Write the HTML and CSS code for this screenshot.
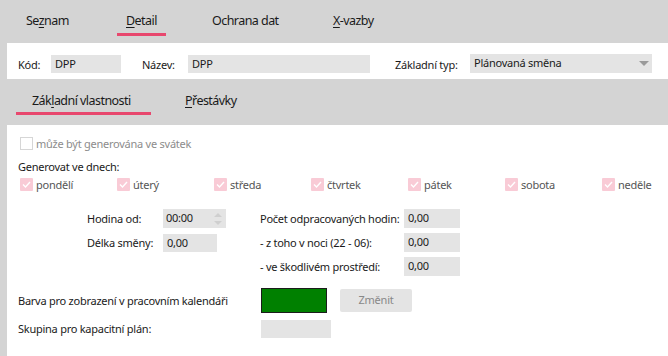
FILE: index.html
```html
<!DOCTYPE html>
<html lang="cs">
<head>
<meta charset="utf-8">
<link rel="stylesheet" href="styles.css">
</head>
<body>
<nav class="tabs tabs-top">
  <div class="tab t1">Se<u>z</u>nam</div>
  <div class="tab t2 active"><u>D</u>etail</div>
  <div class="tab t3">Ochrana dat</div>
  <div class="tab t4"><u>X</u>-vazby</div>
</nav>
<section class="panel head">
  <label class="lbl l-kod">Kód:</label>
  <div class="inp w70">DPP</div>
  <label class="lbl l-naz">Název:</label>
  <div class="inp w182">DPP</div>
  <label class="lbl l-typ">Základní typ:</label>
  <div class="inp w182 select">Plánovaná směna<span class="arrow"></span></div>
</section>
<nav class="tabs tabs-sub">
  <div class="tab s1 active">Zák<u>l</u>adní vlastnosti</div>
  <div class="tab s2"><u>P</u>řestávky</div>
</nav>
<section class="panel body">
  <div class="row check-row">
    <span class="cb empty"></span><span class="dis">může být generována ve svátek</span>
  </div>
  <div class="row gen">Generovat ve dnech:</div>
  <div class="days">
    <div class="day"><span class="cb on"><svg viewBox="0 0 13 13"><polyline points="3,6.5 5.5,9 10,4"/></svg></span>pondělí</div>
    <div class="day"><span class="cb on"><svg viewBox="0 0 13 13"><polyline points="3,6.5 5.5,9 10,4"/></svg></span>úterý</div>
    <div class="day"><span class="cb on"><svg viewBox="0 0 13 13"><polyline points="3,6.5 5.5,9 10,4"/></svg></span>středa</div>
    <div class="day"><span class="cb on"><svg viewBox="0 0 13 13"><polyline points="3,6.5 5.5,9 10,4"/></svg></span>čtvrtek</div>
    <div class="day"><span class="cb on"><svg viewBox="0 0 13 13"><polyline points="3,6.5 5.5,9 10,4"/></svg></span>pátek</div>
    <div class="day"><span class="cb on"><svg viewBox="0 0 13 13"><polyline points="3,6.5 5.5,9 10,4"/></svg></span>sobota</div>
    <div class="day"><span class="cb on"><svg viewBox="0 0 13 13"><polyline points="3,6.5 5.5,9 10,4"/></svg></span>neděle</div>
  </div>
  <div class="hours">
    <div class="hl">Hodina od:</div>
    <div><div class="inp w63 spin">00:00<span class="spinbtn"><svg viewBox="0 0 10 16"><polygon points="1,6 5,2 9,6"/><polygon points="1,10 5,14 9,10"/></svg></span></div></div>
    <div class="hl">Počet odpracovaných hodin:</div>
    <div><div class="inp w56">0,00</div></div>
    <div class="hl">Délka směny:</div>
    <div><div class="inp w54">0,00</div></div>
    <div class="hl">- z toho v noci (22 - 06):</div>
    <div><div class="inp w56">0,00</div></div>
    <div></div>
    <div></div>
    <div class="hl">- ve škodlivém prostředí:</div>
    <div><div class="inp w56">0,00</div></div>
  </div>
  <div class="color-row">
    <div class="hl">Barva pro zobrazení v pracovním kalendáři</div>
    <div class="swatch"></div>
    <div class="btn">Změnit</div>
  </div>
  <div class="group-row">
    <div class="hl">Skupina pro kapacitní plán:</div>
    <div class="inp w70"></div>
  </div>
</section>
</body>
</html>
```
FILE: styles.css
```css
html, body {
  margin: 0;
  padding: 0;
}
body {
  width: 668px;
  height: 356px;
  overflow: hidden;
  background: #d4d4d4;
  font-family: "Noto Sans", "DejaVu Sans", sans-serif;
  font-size: 11px;
  letter-spacing: -0.25px;
  color: #1a1a1a;
}
u { text-decoration: underline; text-underline-offset: 2px; text-decoration-thickness: 1px; }

.tabs {
  display: grid;
  box-sizing: border-box;
}
.tab {
  position: relative;
  white-space: nowrap;
  box-sizing: border-box;
  font-size: 12.5px;
  letter-spacing: -0.55px;
}
.tab.active::after {
  content: "";
  position: absolute;
  left: 0;
  right: 0;
  height: 3px;
  background: #e8486e;
}

.tabs-top {
  height: 43px;
  padding-left: 17px;
  grid-template-columns: 100px 86px 121px 80px;
  align-items: start;
  padding-top: 12px;
}
.tabs-top .tab { padding-left: 9px; line-height: 18px; }
.tabs-top .tab.t2 { width: 49px; }
.tabs-top .tab.active::after { top: 21px; }

.tabs-sub {
  height: 46px;
  padding-left: 16px;
  padding-top: 13px;
  grid-template-columns: 153px 100px;
}
.tabs-sub .tab { line-height: 18px; }
.tabs-sub .tab.s1 { padding-left: 16px; width: 135px; }
.tabs-sub .tab.s2 { padding-left: 16px; }
.tabs-sub .tab.active::after { top: 20px; }

.panel {
  background: #fff;
  margin-left: 7px;
  box-sizing: border-box;
}
.head {
  height: 36px;
  padding: 12px 0 0 11px;
  display: flex;
  align-items: flex-start;
}
.lbl { line-height: 19px; }
.l-kod { width: 33px; }
.l-naz { width: 46px; margin-left: 21px; }
.l-typ { width: 75px; margin-left: 25px; }

.inp {
  background: #e4e4e4;
  height: 18px;
  line-height: 17px;
  padding-left: 4px;
  box-sizing: border-box;
  position: relative;
  white-space: nowrap;
}
.w70 { width: 70px; }
.w182 { width: 182px; }
.w63 { width: 63px; }
.w56 { width: 56px; }
.w54 { width: 54px; }
.select { height: 19px; margin-top: -1px; line-height: 18px; }
.arrow {
  position: absolute;
  right: 3px;
  top: 7px;
  width: 0;
  height: 0;
  border-left: 5px solid transparent;
  border-right: 5px solid transparent;
  border-top: 5px solid #9a9a9a;
}

.body {
  height: 231px;
  padding: 10px 0 0 11px;
}
.row {
  display: flex;
  align-items: center;
  height: 16px;
}
.cb {
  display: inline-block;
  width: 13px;
  height: 13px;
  box-sizing: border-box;
  margin-right: 3px;
  flex: none;
}
.cb.empty {
  border: 1px solid #d6d6d6;
  background: #fff;
  margin-left: 2px;
}
.cb.on {
  background: #f9cbd6;
  border-radius: 1px;
}
.cb svg { display: block; width: 13px; height: 13px; }
.cb polyline { fill: none; stroke: #fff; stroke-width: 1.4; }
.dis { color: #8c8c8c; }
.gen { margin-top: 7px; }
.days {
  display: grid;
  grid-template-columns: repeat(7, 97px);
  margin-top: 2px;
  margin-left: 2px;
  height: 16px;
}
.day {
  display: flex;
  align-items: center;
  color: #555;
  white-space: nowrap;
}

.hours {
  display: grid;
  grid-template-columns: 76px 97px 144px 56px;
  grid-auto-rows: 19px;
  row-gap: 5px;
  margin-top: 17px;
  margin-left: 69px;
  align-items: center;
}
.hl { white-space: nowrap; line-height: 16px; }
.hours .inp { height: 19px; line-height: 18px; }
.hours .w54 { height: 18px; }
.spin { padding-left: 3px; }
.spinbtn {
  position: absolute;
  right: 3px;
  top: 2px;
  width: 10px;
  height: 16px;
}
.spinbtn svg { display: block; width: 10px; height: 16px; }
.spinbtn polygon { fill: #cfcfcf; }

.color-row {
  display: grid;
  grid-template-columns: 230px 66px 72px;
  column-gap: 13px;
  align-items: center;
  margin-top: 12px;
  height: 25px;
}
.swatch {
  height: 25px;
  background: #008000;
  border: 1px solid #1c1c1c;
  box-sizing: border-box;
}
.btn {
  height: 23px;
  background: #e4e4e4;
  border-radius: 2px;
  color: #888;
  text-align: center;
  line-height: 22px;
}
.group-row {
  display: grid;
  grid-template-columns: 243px 70px;
  align-items: center;
  margin-top: 7px;
  height: 18px;
}
```
